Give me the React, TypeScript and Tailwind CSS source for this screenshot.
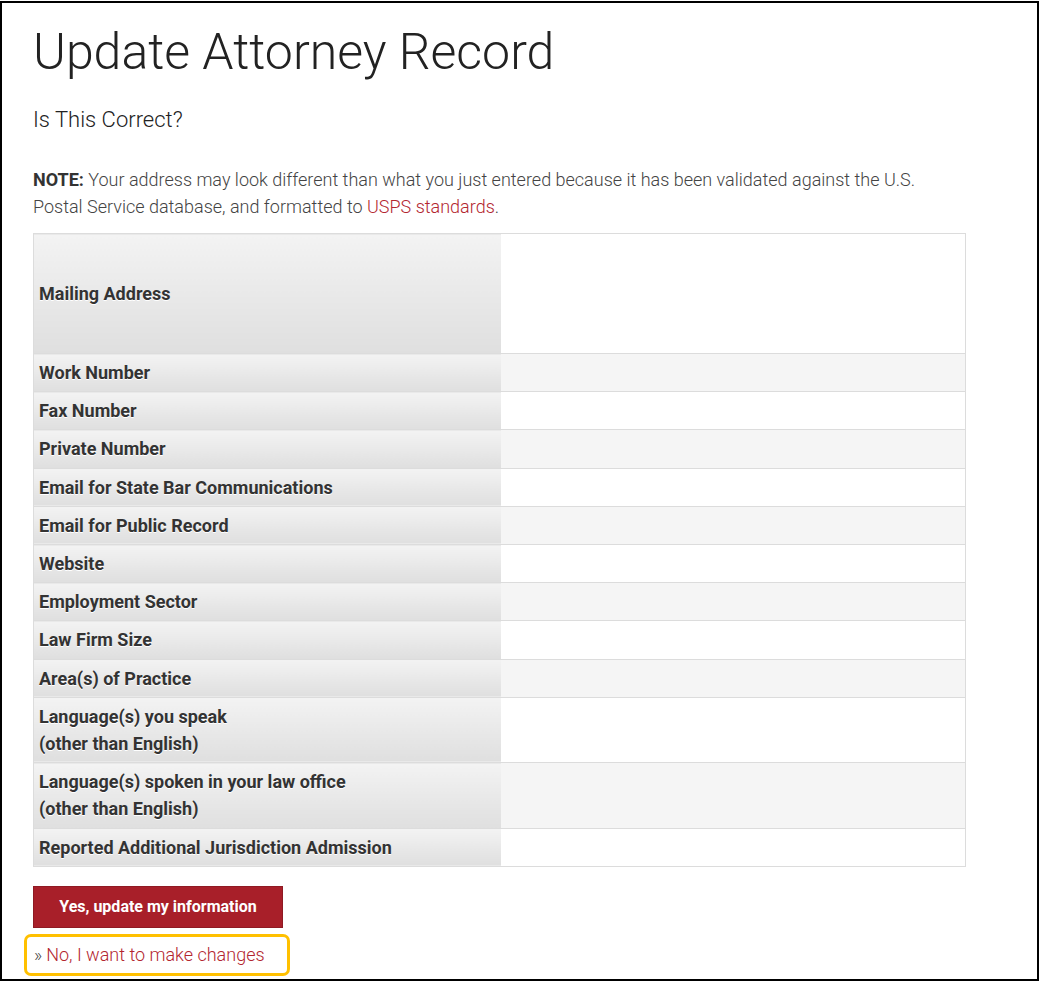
const rows: { label: string[]; tall?: boolean }[] = [
  { label: ["Mailing Address"], tall: true },
  { label: ["Work Number"] },
  { label: ["Fax Number"] },
  { label: ["Private Number"] },
  { label: ["Email for State Bar Communications"] },
  { label: ["Email for Public Record"] },
  { label: ["Website"] },
  { label: ["Employment Sector"] },
  { label: ["Law Firm Size"] },
  { label: ["Area(s) of Practice"] },
  { label: ["Language(s) you speak", "(other than English)"] },
  { label: ["Language(s) spoken in your law office", "(other than English)"] },
  { label: ["Reported Additional Jurisdiction Admission"] },
];

export default function App() {
  return (
    <div className="min-h-[981px] bg-white font-['Roboto',sans-serif]">
      <div className="mt-px h-[980px] w-[1039px] border-2 border-black pl-[31px] pr-[71px]">
        {/* Heading */}
        <h1 className="mt-[16px] text-[50px] font-light leading-[66px] text-[#222]">
          Update Attorney Record
        </h1>
        <h2 className="mt-[20px] text-[22px] font-light leading-[30px] text-[#222]">
          Is This Correct?
        </h2>
        <p className="mt-[31px] text-[18px] font-light leading-[27px] text-[#444]">
          <strong className="font-bold text-[#333]">NOTE:</strong> Your address
          may look different than what you just entered because it has been
          validated against the U.S. Postal Service database, and formatted to{" "}
          <a className="text-[#b3262f]">USPS standards</a>.
        </p>

        {/* Record table */}
        <table className="mt-[13px] w-[933px] border-collapse border border-[#dcdcdc]">
          <tbody>
            {rows.map((row, i) => (
              <tr key={i} className="border-t border-[#dcdcdc]">
                <th
                  className={`w-[467px] bg-linear-to-b from-[#f3f3f3] to-[#dfdfdf] px-[5px] py-[5px] text-left align-middle text-[18px] font-bold leading-[27.2px] text-[#333] [text-shadow:0_1px_0_#fff] ${
                    row.tall ? "h-[120px]" : ""
                  }`}
                >
                  {row.label.map((l, j) => (
                    <div key={j}>{l}</div>
                  ))}
                </th>
                <td className={i % 2 === 0 ? "bg-white" : "bg-[#f5f5f5]"}></td>
              </tr>
            ))}
          </tbody>
        </table>

        {/* Actions */}
        <button className="mt-[19px] flex h-[42px] w-[250px] items-center justify-center border border-[#8f1a23] bg-[#a81f29] text-[16px] font-bold text-white">
          Yes, update my information
        </button>
        <div className="-ml-[9px] mt-[6px] inline-flex h-[42px] items-center rounded-[7px] border-[3px] border-[#ffc000] pl-[7px] pr-[22px]">
          <span className="text-[18px] font-light text-[#444]">»</span>
          <a className="ml-[4px] text-[18px] font-light text-[#b3262f]">No, I want to make changes</a>
        </div>
      </div>
    </div>
  );
}
